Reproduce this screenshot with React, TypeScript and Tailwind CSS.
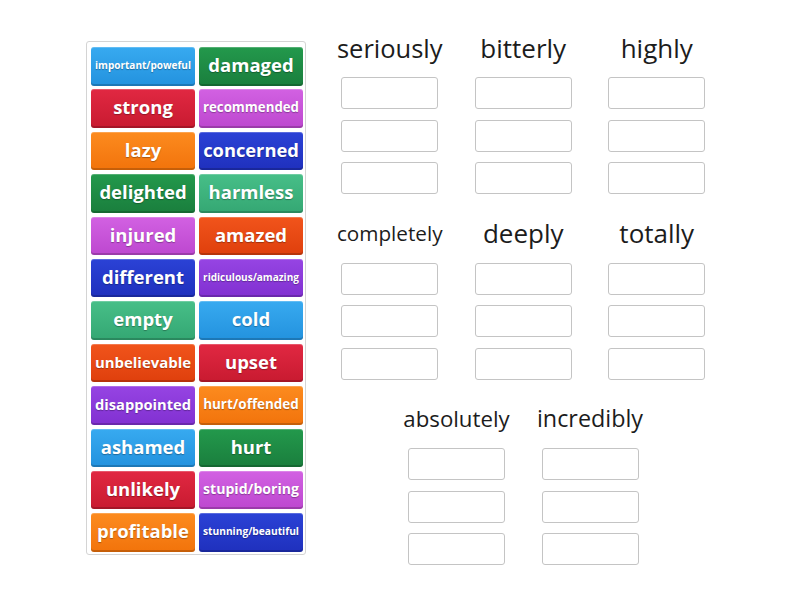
import { useLayoutEffect, useRef, useState } from "react";

const colors: Record<string, string> = {
  lightblue: "from-[#37aaf0] to-[#2392de]",
  green: "from-[#23994c] to-[#1a7e3d]",
  red: "from-[#e12842] to-[#c81a30]",
  pink: "from-[#d261e2] to-[#bd47cf]",
  orange: "from-[#fc8b1e] to-[#f2730a]",
  darkblue: "from-[#2b42d6] to-[#1f30bd]",
  teal: "from-[#47bf88] to-[#34a773]",
  orangered: "from-[#f1541b] to-[#df3f0c]",
  violet: "from-[#9644e3] to-[#8130d1]",
};

const tiles: [string, string][] = [
  ["important/poweful", "lightblue"],
  ["damaged", "green"],
  ["strong", "red"],
  ["recommended", "pink"],
  ["lazy", "orange"],
  ["concerned", "darkblue"],
  ["delighted", "green"],
  ["harmless", "teal"],
  ["injured", "pink"],
  ["amazed", "orangered"],
  ["different", "darkblue"],
  ["ridiculous/amazing", "violet"],
  ["empty", "teal"],
  ["cold", "lightblue"],
  ["unbelievable", "orangered"],
  ["upset", "red"],
  ["disappointed", "violet"],
  ["hurt/offended", "orange"],
  ["ashamed", "lightblue"],
  ["hurt", "green"],
  ["unlikely", "red"],
  ["stupid/boring", "pink"],
  ["profitable", "orange"],
  ["stunning/beautiful", "darkblue"],
];

const sections = [
  ["seriously", "bitterly", "highly"],
  ["completely", "deeply", "totally"],
  ["absolutely", "incredibly"],
];

// shrink text until it fits the given width
function FitText({ text, max, width, className }: { text: string; max: number; width: number; className: string }) {
  const ref = useRef<HTMLSpanElement>(null);
  const [size, setSize] = useState(max);

  useLayoutEffect(() => {
    const measure = () => {
      const el = ref.current;
      if (!el) return;
      el.style.fontSize = max + "px";
      const w = el.offsetWidth;
      const next = w > width ? (max * width) / w : max;
      el.style.fontSize = next + "px";
      setSize(next);
    };
    measure();
    document.fonts?.ready.then(measure);
  }, [text, max, width]);

  return (
    <span ref={ref} className={`whitespace-nowrap ${className}`} style={{ fontSize: size }}>
      {text}
    </span>
  );
}

function Tile({ text, color }: { text: string; color: string }) {
  return (
    <div
      className={`flex items-center justify-center rounded-[3px] bg-gradient-to-b pb-[2px] ${colors[color]} shadow-[inset_0_1px_0_rgba(255,255,255,0.22),inset_0_-2px_0_rgba(0,0,0,0.18)]`}
    >
      <FitText
        text={text}
        max={18.5}
        width={96}
        className="font-['Open_Sans',sans-serif] font-bold leading-none text-white [text-shadow:0_1px_1px_rgba(0,0,0,0.3)]"
      />
    </div>
  );
}

function Column() {
  return (
    <div className="flex w-[133.5px] flex-col items-center gap-[10.5px]">
      <div className="h-8 w-[97px] rounded-[3px] border border-[#c4c4c4] bg-white" />
      <div className="h-8 w-[97px] rounded-[3px] border border-[#c4c4c4] bg-white" />
      <div className="h-8 w-[97px] rounded-[3px] border border-[#c4c4c4] bg-white" />
    </div>
  );
}

export default function App() {
  return (
    <div className="flex h-[600px] w-[800px] items-start bg-white font-['Open_Sans',sans-serif]">
      {/* word bank */}
      <div className="ml-[86px] mt-[41px] w-[220px] rounded-[3px] border border-[#d4d4d4] pb-[2px] pl-[4px] pr-[2px] pt-[5px]">
        <div className="grid grid-cols-[104px_104px] auto-rows-[38.5px] gap-x-[4px] gap-y-[3.9px]">
          {tiles.map(([text, color], i) => (
            <Tile key={i} text={text} color={color} />
          ))}
        </div>
      </div>

      {/* groups */}
      <div className="ml-[17px] mt-[29px] flex w-[400.5px] flex-col gap-[20.5px]">
        {sections.map((group, i) => (
          <div key={i} className="flex flex-col">
            <div className="flex h-[38px] items-center justify-center">
              {group.map((g) => (
                <div key={g} className="flex w-[133.5px] items-center justify-center">
                  <FitText text={g} max={26} width={106} className="leading-normal text-[#1c1c1c]" />
                </div>
              ))}
            </div>
            <div className="mt-[10px] flex justify-center">
              {group.map((g) => (
                <Column key={g} />
              ))}
            </div>
          </div>
        ))}
      </div>
    </div>
  );
}
